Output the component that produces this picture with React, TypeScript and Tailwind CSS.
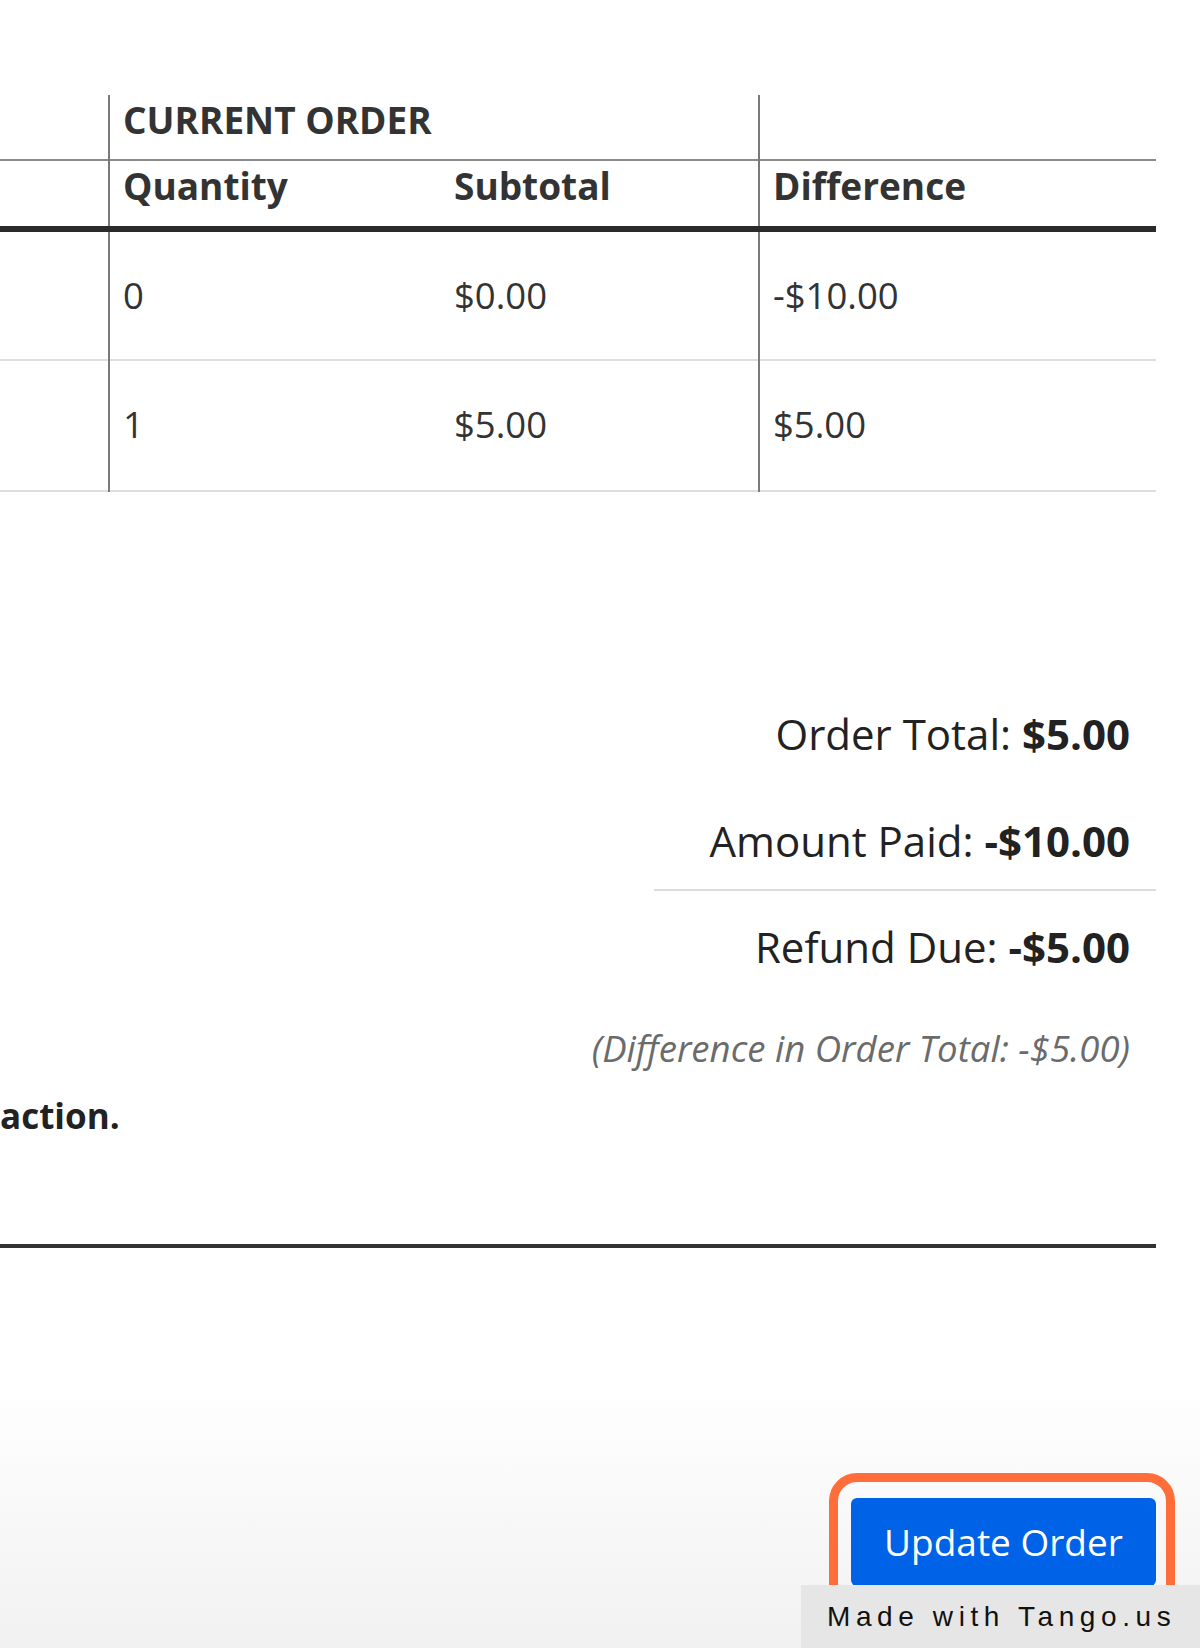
import React from 'react';

const font = { fontFamily: '"Open Sans", "Liberation Sans", sans-serif' };

const rows = [
  { qty: '0', subtotal: '$0.00', diff: '-$10.00' },
  { qty: '1', subtotal: '$5.00', diff: '$5.00' },
];

const SummaryLine: React.FC<{ label: string; value: string }> = ({ label, value }) => (
  <div className="text-[42px] leading-[50px] text-[#222] whitespace-nowrap">
    {label} <span className="font-bold">{value}</span>
  </div>
);

const App: React.FC = () => {
  return (
    <div
      className="relative w-[1200px] h-[1648px] overflow-hidden bg-[linear-gradient(to_bottom,#ffffff_0%,#ffffff_84%,#f1f1f1_100%)]"
      style={font}
    >
      <div className="w-[1156px] pt-[95px]">
        <table className="w-full border-collapse table-fixed text-[#333]">
          <colgroup>
            <col className="w-[109px]" />
            <col className="w-[330px]" />
            <col className="w-[320px]" />
            <col className="w-[397px]" />
          </colgroup>
          <thead>
            <tr className="h-[65px] border-b-2 border-[#8a8a8a]">
              <th />
              <th
                colSpan={2}
                className="border-l-2 border-[#7a7a7a] pl-[13px] pt-[3px] text-left align-top text-[37px] leading-[44px] font-bold"
              >
                CURRENT ORDER
              </th>
              <th className="border-l-2 border-[#7a7a7a]" />
            </tr>
            <tr className="h-[69px] border-b-[6px] border-[#2b2b2b]">
              <th />
              <th className="border-l-2 border-[#7a7a7a] pl-[13px] pt-[3px] text-left align-top text-[37px] leading-[44px] font-bold">
                Quantity
              </th>
              <th className="pl-[15px] pt-[3px] text-left align-top text-[37px] leading-[44px] font-bold">
                Subtotal
              </th>
              <th className="border-l-2 border-[#7a7a7a] pl-[13px] pt-[3px] text-left align-top text-[37px] leading-[44px] font-bold">
                Difference
              </th>
            </tr>
          </thead>
          <tbody>
            {rows.map((r, i) => (
              <tr key={i} className="h-[131px] border-b-2 border-[#dedede]">
                <td />
                <td className="border-l-2 border-[#7a7a7a] pl-[13px] pt-[42px] align-top text-[36.5px] leading-[43px]">
                  {r.qty}
                </td>
                <td className="pl-[15px] pt-[42px] align-top text-[36.5px] leading-[43px]">
                  {r.subtotal}
                </td>
                <td className="border-l-2 border-[#7a7a7a] pl-[13px] pt-[42px] align-top text-[36.5px] leading-[43px]">
                  {r.diff}
                </td>
              </tr>
            ))}
          </tbody>
        </table>

        <div className="flex">
          <div className="flex-1 pt-[603px]">
            <div className="text-[35px] leading-[42px] font-bold text-[#222]">action.</div>
          </div>
          <div className="w-[502px] pt-[217px] flex flex-col items-end">
            <div className="pr-[26px]">
              <SummaryLine label="Order Total:" value="$5.00" />
            </div>
            <div className="pr-[26px] mt-[57px]">
              <SummaryLine label="Amount Paid:" value="-$10.00" />
            </div>
            <div className="w-full h-[2px] bg-[#dcdcdc] mt-[23px]" />
            <div className="pr-[26px] mt-[55px] hidden" />
            <div className="pr-[26px] mt-[31px]">
              <SummaryLine label="Refund Due:" value="-$5.00" />
            </div>
            <div className="pr-[26px] mt-[55px] text-[36.6px] leading-[43px] italic text-[#6b6b6b] whitespace-nowrap">
              (Difference in Order Total: -$5.00)
            </div>
          </div>
        </div>

        <div className="mt-[107px] h-[4px] bg-[#333]" />

        <div className="mt-[250px] flex justify-end">
          <div className="relative">
            <div className="absolute left-[-22px] top-[-25px] right-[-19px] bottom-[-40px] rounded-[28px] border-[9px] border-[#ff6d3a]" />
            <button className="relative w-[305px] h-[88px] rounded-[6px] bg-[#0062e6] text-white text-[37px] leading-[44px]">
              Update Order
            </button>
          </div>
        </div>
      </div>

      <div
        className="absolute left-[801px] top-[1585px] right-0 bottom-0 bg-[#e6e6e6] flex items-center pl-[26px] text-[28px] tracking-[5.6px] text-[#111] whitespace-nowrap"
        style={{ fontFamily: '"Liberation Sans", Arial, sans-serif' }}
      >
        Made with Tango.us
      </div>
    </div>
  );
};

export default App;
